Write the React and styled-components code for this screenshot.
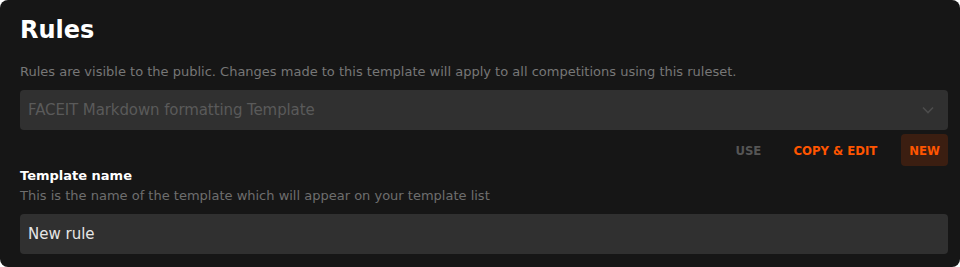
import React from "react";
import styled, { createGlobalStyle } from "styled-components";

const Global = createGlobalStyle`
  html, body { margin: 0; padding: 0; background: #ffffff; }
  body { font-family: "DejaVu Sans", "Liberation Sans", sans-serif; }
  * { box-sizing: border-box; }
`;

const Card = styled.section`
  width: 960px;
  height: 267px;
  background: #161616;
  border-radius: 8px;
  padding: 14px 12px 0 20px;
  display: flex;
  flex-direction: column;
`;

const Title = styled.h1`
  margin: 0;
  font-size: 24px;
  line-height: 32px;
  font-weight: 700;
  color: #ffffff;
`;

const Description = styled.p`
  margin: 17px 0 0;
  font-size: 13px;
  line-height: 18px;
  color: #777777;
`;

const Field = styled.div`
  height: 40px;
  border-radius: 4px;
  background: #303030;
  display: flex;
  align-items: center;
  padding: 0 14px 0 8px;
  font-size: 15px;
  letter-spacing: ${(p) => (p.$muted ? "-0.1px" : "0")};
  color: ${(p) => (p.$muted ? "#5a5a5a" : "#e6e6e6")};
  margin-top: ${(p) => p.$top}px;
`;

const FieldText = styled.span`
  flex: 1;
`;

const Actions = styled.div`
  display: flex;
  justify-content: flex-end;
  gap: 16px;
  margin-top: 4px;
`;

const ActionButton = styled.button`
  height: 32px;
  padding: 0 8px;
  border: none;
  border-radius: 4px;
  font-family: "DejaVu Sans Condensed", "DejaVu Sans", sans-serif;
  font-size: 13px;
  font-weight: 700;
  background: ${(p) => (p.$filled ? "#3b1e11" : "transparent")};
  color: ${(p) => (p.$disabled ? "#555555" : "#ff5500")};
  cursor: pointer;
`;

const Label = styled.div`
  margin-top: 1px;
  font-size: 13px;
  line-height: 18px;
  font-weight: 700;
  color: #ffffff;
`;

const Hint = styled.div`
  margin-top: 2px;
  font-size: 13px;
  line-height: 18px;
  color: #6e6e6e;
`;

const Chevron = () => (
  <svg width="12" height="8" viewBox="0 0 12 8" fill="none">
    <path d="M1 1.5L6 6.5L11 1.5" stroke="#4c4c4c" strokeWidth="1.6" />
  </svg>
);

export default function App() {
  return (
    <>
      <Global />
      <Card>
        <Title>Rules</Title>
        <Description>
          Rules are visible to the public. Changes made to this template will apply to all competitions using this ruleset.
        </Description>
        <Field $muted $top={9}>
          <FieldText>FACEIT Markdown formatting Template</FieldText>
          <Chevron />
        </Field>
        <Actions>
          <ActionButton $disabled>USE</ActionButton>
          <ActionButton>COPY &amp; EDIT</ActionButton>
          <ActionButton $filled>NEW</ActionButton>
        </Actions>
        <Label>Template name</Label>
        <Hint>This is the name of the template which will appear on your template list</Hint>
        <Field $top={9}>
          <FieldText>New rule</FieldText>
        </Field>
      </Card>
    </>
  );
}
